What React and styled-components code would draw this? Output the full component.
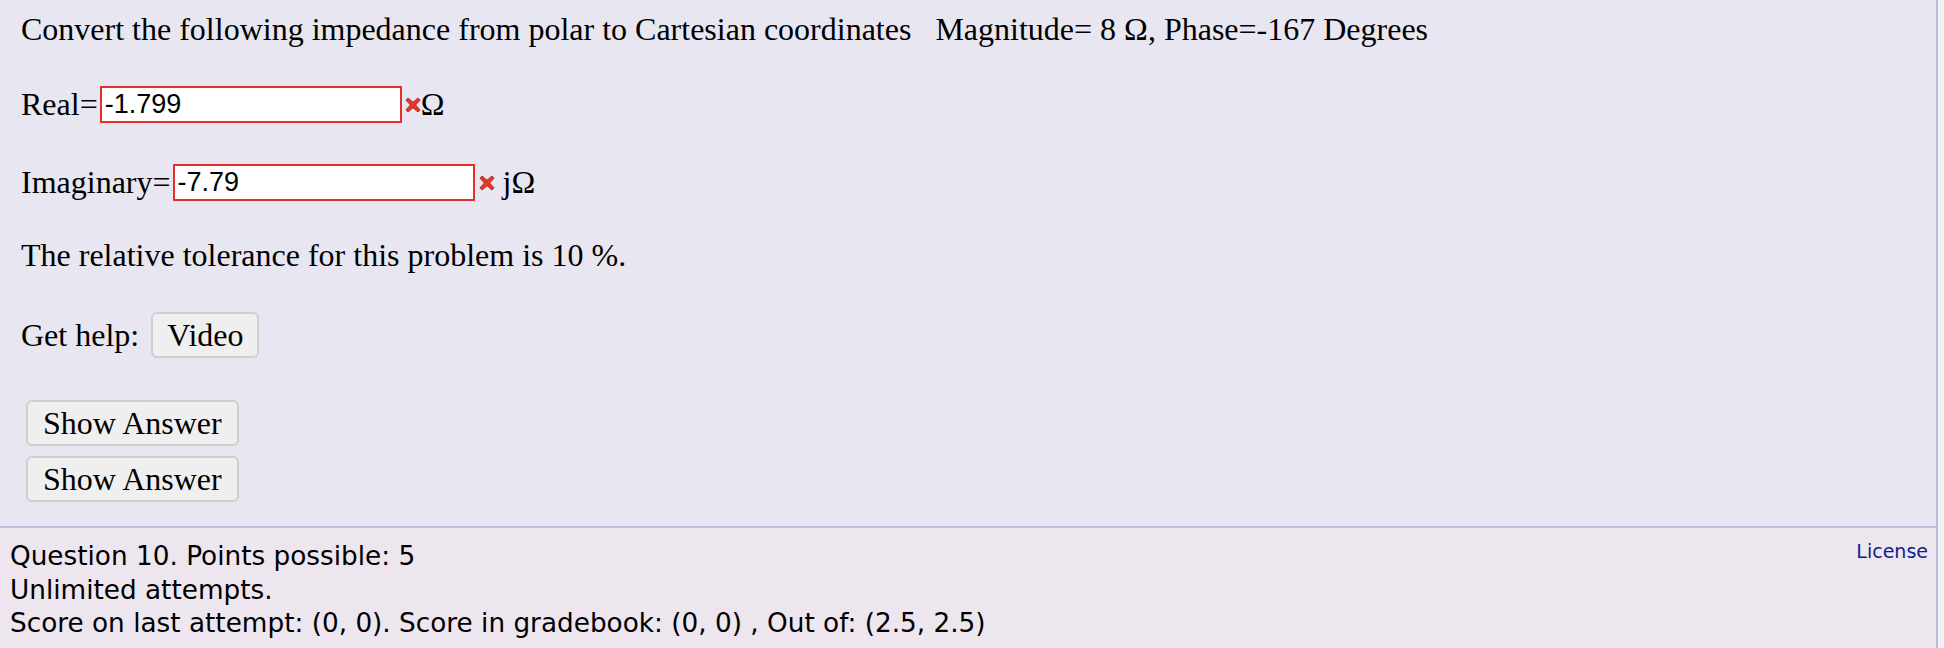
import React from "react";
import styled, { createGlobalStyle } from "styled-components";

const Global = createGlobalStyle`
  html, body { margin: 0; padding: 0; background: #f2f1f6; }
  body { font-family: "Liberation Serif", "Times New Roman", serif; color: #000; }
`;

const Page = styled.div`
  width: 1936px;
  border-right: 2px solid #bdbddb;
  height: 648px;
  display: flex;
  flex-direction: column;
  overflow: hidden;
`;

const QuestionBody = styled.div`
  background: #e8e6f1;
  padding: 11px 21px 24px 21px;
  font-size: 32px;
`;

const Para = styled.p`
  margin: ${(p) => p.$mt || 0}px 0 0 0;
  display: flex;
  align-items: center;
  white-space: pre;
`;

const AnswerInput = styled.input`
  font-family: "Liberation Sans", Arial, Helvetica, sans-serif;
  font-size: 27px;
  width: 302px;
  height: 37px;
  box-sizing: border-box;
  border: 2px solid #e5302a;
  padding: 0 3px;
  margin: 0 0 0 2px;
  background: #fff;
  color: #000;
  outline: none;
`;

const Unit = styled.span`
  margin-left: ${(p) => p.$ml || 0}px;
`;

const WrongMark = styled.svg`
  width: 16px;
  height: 16px;
  margin-left: ${(p) => p.$ml || 3}px;
  flex: none;
`;

const Wrong = ({ ml }) => (
  <WrongMark $ml={ml} viewBox="0 0 16 16">
    <path
      d="M3 1 L8 5.2 L13 1 L15 3.2 L10.6 8 L15 12.8 L13 15 L8 10.8 L3 15 L1 12.8 L5.4 8 L1 3.2 Z"
      fill="#e8352c"
      stroke="#b02019"
      strokeWidth="0.9"
      strokeLinejoin="round"
    />
  </WrongMark>
);

const Button = styled.button`
  font-family: "Liberation Serif", "Times New Roman", serif;
  font-size: 32px;
  background: #efefef;
  border: 2px solid #cfcfcf;
  border-radius: 6px;
  color: #000;
  height: 46px;
  box-sizing: border-box;
  padding: 0 ${(p) => p.$px || 15}px;
  margin: 0;
  line-height: 1;
`;

const HelpRow = styled.div`
  display: flex;
  align-items: center;
  margin-top: 38px;
  gap: 12px;
`;

const ButtonStack = styled.div`
  display: flex;
  flex-direction: column;
  align-items: flex-start;
  gap: 10px;
  margin: 42px 0 0 5px;
`;

const Footer = styled.div`
  flex: 1;
  background: #ede6ef;
  border-top: 2px solid #bfc0dc;
  padding: 12px 8px 0 10px;
  display: flex;
  justify-content: space-between;
  align-items: flex-start;
`;

const Info = styled.div`
  font-family: "DejaVu Sans", Verdana, sans-serif;
  font-size: 26.3px;
  line-height: 33.5px;
  color: #000;
`;

const License = styled.a`
  font-family: "DejaVu Sans", Verdana, sans-serif;
  font-size: 19px;
  color: #0c1d8f;
  text-decoration: none;
  margin-top: 0;
`;

export default function App() {
  return (
    <>
      <Global />
      <Page>
        <QuestionBody>
          <Para>
            Convert the following impedance from polar to Cartesian coordinates   Magnitude= 8 Ω, Phase=-167 Degrees
          </Para>
          <Para $mt={38}>
            Real=<AnswerInput defaultValue="-1.799" />
            <Wrong ml={3} />
            <Unit>Ω</Unit>
          </Para>
          <Para $mt={41}>
            Imaginary=<AnswerInput defaultValue="-7.79" />
            <Wrong ml={4} />
            <Unit $ml={8}>jΩ</Unit>
          </Para>
          <Para $mt={36}>The relative tolerance for this problem is 10 %.</Para>
          <HelpRow>
            <span>Get help:</span>
            <Button $px={14}>Video</Button>
          </HelpRow>
          <ButtonStack>
            <Button>Show Answer</Button>
            <Button>Show Answer</Button>
          </ButtonStack>
        </QuestionBody>
        <Footer>
          <Info>
            <div>Question 10. Points possible: 5</div>
            <div>Unlimited attempts.</div>
            <div>Score on last attempt: (0, 0). Score in gradebook: (0, 0) , Out of: (2.5, 2.5)</div>
          </Info>
          <License href="#">License</License>
        </Footer>
      </Page>
    </>
  );
}
